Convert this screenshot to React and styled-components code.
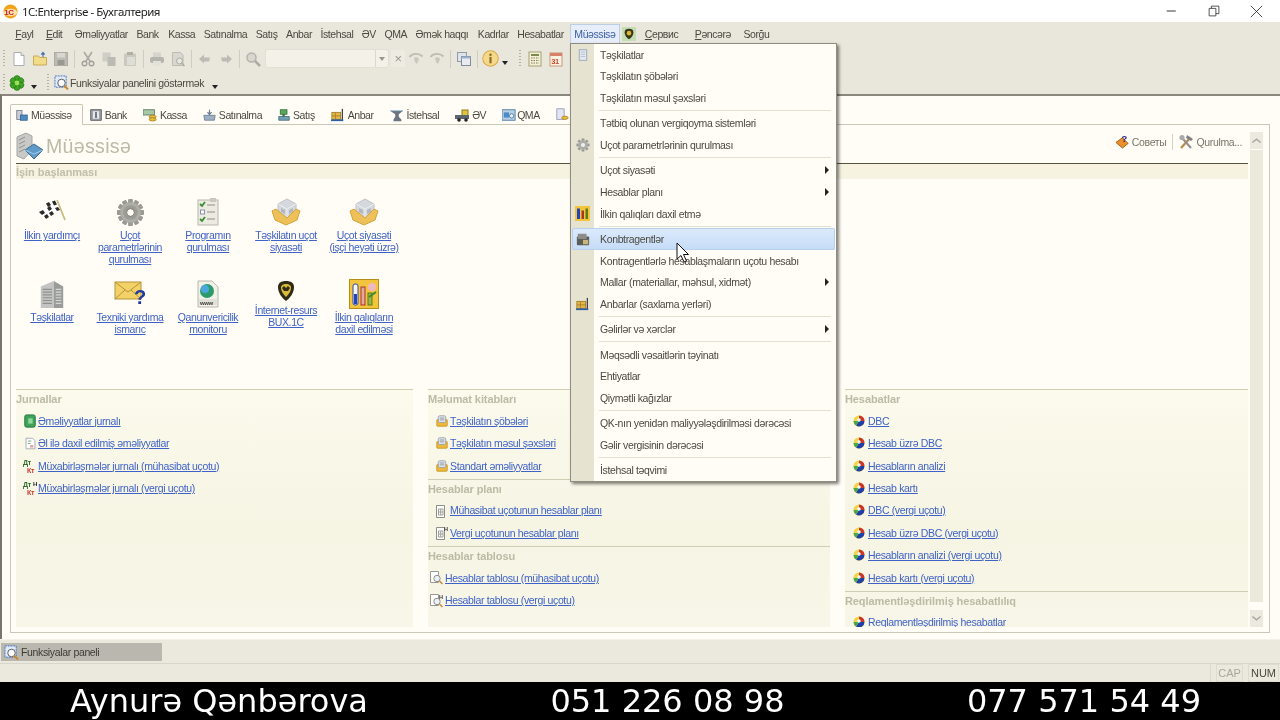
import React from 'react';
import styled, { createGlobalStyle } from 'styled-components';

const Global = createGlobalStyle`
  html, body { margin: 0; padding: 0; background: #000; }
  body { font-family: "Liberation Sans", Arial, sans-serif; }
  * { box-sizing: border-box; }
`;

const Window = styled.div`
  position: relative; width: 1280px; height: 720px; overflow: hidden;
  display: flex; flex-direction: column; background: #e9e6db;
  font: 10.5px/12px "Liberation Sans", Arial, sans-serif; letter-spacing: -.35px; color: #4a4940;
  filter: blur(0.3px);
`;
const TitleBar = styled.div`
  height: 22px; flex: none; background: #fff; display: flex; align-items: center;
  padding-left: 3px; font: 11.5px "Noto Sans", sans-serif; letter-spacing: -.5px; color: #222;
`;
const TitleText = styled.span` margin-left: 4px; `;
const WinControls = styled.div` margin-left: auto; display: flex; padding-right: 2px; `;
const WinButton = styled.div` width: 42.5px; height: 22px; display: flex; align-items: center; justify-content: center; `;

const MenuBar = styled.div`
  height: 24px; flex: none; display: flex; align-items: center; padding-left: 11px;
`;
const Grip = styled.i`
  flex: none; width: 2px; height: 17px; margin: ${p => p.$m || '0 3px 0 3px'};
  background: repeating-linear-gradient(#b5b2a6 0 1px, transparent 1px 3px);
`;
const MenuEntry = styled.div`
  padding: 0 3.25px; height: 20px; display: flex; align-items: center; white-space: nowrap; letter-spacing: -.42px;
  border: 1px solid ${p => p.$on ? '#bccde6' : 'transparent'};
  background: ${p => p.$on ? '#e7eefa' : 'transparent'};
  color: ${p => p.$on ? '#3a5ea6' : '#4a4940'};
  margin-left: ${p => p.$ml || 0}px;
`;
const ToolBar = styled.div`
  height: ${p => p.$h}px; flex: none; display: flex; align-items: center;
`;
const ToolSlot = styled.div`
  width: ${p => p.$w || 21}px; height: 21px; flex: none; display: flex; align-items: center; justify-content: center;
`;
const ToolSep = styled.i`
  flex: none; width: 1px; height: 18px; margin: 0 2.5px; background: #cfccc0;
`;
const Combo = styled.div`
  flex: none; width: 124px; height: 19px; margin-left: 2px; display: flex; border-radius: 3px;
  background: #f3f1e8; border: 1px solid #e2dfd4;
`;
const ComboDrop = styled.div`
  margin-left: auto; width: 13px; border-left: 1px solid #dbd8cd; display: flex; align-items: center; justify-content: center;
`;
const DownTri = styled.i`
  width: 0; height: 0; flex: none; border: 3px solid transparent; border-top: 4px solid ${p => p.$c || '#222'}; border-bottom: 0;
  margin-top: ${p => p.$mt || 0}px; margin-left: ${p => p.$ml || 0}px;
`;
const ClearBtn = styled.div`
  flex: none; width: 14px; height: 17px; margin-left: 2px; background: #eeebe2; color: #9a978c; font-size: 13px; display: flex; align-items: center; justify-content: center;
`;
const QuickBtn = styled.div`
  display: flex; align-items: center; gap: 1px; white-space: nowrap; margin-left: 1px;
`;
const Workspace = styled.div`
  flex: none; height: 545px; border-top: 2px solid #8a887e; border-left: 2px solid #77756c;
  background: #fffdf5; padding: 8px 10px 6px 8px; display: flex; flex-direction: column;
`;
const TabRow = styled.div` display: flex; height: 21px; flex: none; position: relative; z-index: 1; letter-spacing: -.45px; `;
const Tab = styled.div`
  display: flex; align-items: center; gap: ${p => p.$gap ?? 3}px; white-space: nowrap; height: 21px; padding: 0 8px;
  ${p => p.$on && `padding: 0 10px 0 5px; margin-right: -1px; background: #fffdf5; border: 1px solid #c9c7b6; border-bottom: 0; border-radius: 2px 2px 0 0;`}
`;
const DocBody = styled.div`
  flex: 1; min-height: 0; margin-top: -1px; border: 1px solid #c9c7b6; padding: 7px 7px 5px 5px; display: flex;
`;
const Scroller = styled.div`
  width: 1232px; flex: none; height: 100%; overflow: hidden; display: flex; flex-direction: column;
`;
const DocHead = styled.div`
  height: 32px; flex: none; border-bottom: 1px solid #55533f; display: flex; align-items: flex-start;
`;
const DocTitle = styled.div`
  margin-left: 2px; margin-top: 1px; font: 19.5px/26px "Liberation Sans", sans-serif; letter-spacing: .35px; color: #bcbaa6;
`;
const HeadTools = styled.div`
  margin-left: auto; margin-right: 6px; height: 19px; display: flex; align-items: center; gap: 2px; color: #77766a;
`;
const HeadSep = styled.i` width: 1px; height: 16px; background: #d5d3c4; margin: 0 3px 0 4px; `;
const Band = styled.div`
  height: 15px; flex: none; background: #f6f4e0; font-weight: bold; font-size: 11px; line-height: 16px; letter-spacing: -.05px; color: #c0beaa;
`;
const IconGrid = styled.div`
  display: grid; grid-template-columns: repeat(5, 72px); column-gap: 6px; grid-auto-rows: 82px; padding-top: 16px; height: 210px; flex: none;
`;
const GridCell = styled.div`
  display: flex; flex-direction: column; align-items: center; text-align: center; color: #3f62c8; letter-spacing: -.4px;
`;
const GridIcon = styled.div`
  height: ${p => p.$h || 34}px; flex: none; display: flex; align-items: center; justify-content: center;
`;
const GridLabel = styled.a` text-decoration: underline; line-height: 12px; white-space: nowrap; `;
const Columns = styled.div`
  display: grid; grid-template-columns: 397px 402px 403px; column-gap: 15px; height: 238px; flex: none; overflow: hidden;
`;
const Col = styled.div`
  background: linear-gradient(#fbfaec, #f6f4e3 60%, #f8f6e8); min-height: 0; overflow: hidden;
`;
const Section = styled.div` border-top: 1px solid #cfcdb2; padding-bottom: 1.9px; `;
const SecHead = styled.div`
  height: 19.6px; padding-top: 2px; font-weight: bold; font-size: 11px; line-height: 14px; letter-spacing: -.1px; color: #bcbaa5; white-space: nowrap;
`;
const LinkRow = styled.div`
  height: 22.4px; display: flex; align-items: center; gap: ${p => p.$gap}px; padding-left: ${p => p.$ind}px; color: #3f62c8; white-space: nowrap;
`;
const LinkText = styled.a` text-decoration: underline; `;
const ScrollBar = styled.div`
  width: 13px; flex: none; margin-left: 2px; display: flex; flex-direction: column; height: 100%;
`;
const ScrollBtn = styled.div`
  height: 17px; flex: none; background: #eceadf; display: flex; align-items: center; justify-content: center;
`;
const ScrollTrack = styled.div` height: 452px; margin-top: 1px; background: #ebe9dc; flex: none; `;
const Gap = styled.div` flex: 1; `;

const TaskBar = styled.div`
  height: 24px; flex: none; padding: 3px 0 3px 1px; background: #ebe8de; border-top: 1px solid #f4f2ea;
`;
const TaskBtn = styled.div`
  width: 161px; height: 18px; background: #bab7af; display: flex; align-items: center; gap: 2px; padding-left: 3px; color: #3c3b35;
`;
const StatusBar = styled.div`
  height: 19px; flex: none; display: flex; background: #ebe8de; border-top: 1px solid #d8d5ca; gap: 5px;
`;
const StatusMain = styled.div` width: 1211px; border-right: 1px solid #dcd9ce; `;
const StatusCell = styled.div`
  width: ${p => p.$w}px; display: flex; align-items: center; justify-content: center; border: 1px solid #dedbd0; color: ${p => p.$dim ? '#a9a79c' : '#4a4940'}; font-size: 11px; letter-spacing: 0;
`;
const Caption = styled.div`
  flex: 1; background: #000; color: #fff; display: flex; justify-content: space-between; align-items: center;
  padding: 0 79px 0 70px; font: 32px/38px "DejaVu Sans", sans-serif; letter-spacing: 0;
`;

const DropMenu = styled.div`
  position: absolute; left: 570px; top: 43px; width: 267px; height: 439px; z-index: 5; padding: 0 1px;
  border: 1px solid #8f8d80; box-shadow: 2px 2px 3px rgba(0,0,0,.5);
  background: linear-gradient(90deg, #e6e3d0 23px, #fffdf5 23px);
`;
const MItem = styled.div`
  height: 21.6px; display: flex; align-items: center; padding-right: 6px; white-space: nowrap; border-radius: 2px;
  ${p => p.$hl && `background: linear-gradient(#dcebfd, #c5dbf7); outline: 1px solid #b9d0ec; outline-offset: -1px;`}
`;
const MIcon = styled.div` width: 28px; flex: none; display: flex; justify-content: center; padding-right: 7px; `;
const MSep = styled.div`
  height: 3.8px; display: flex; align-items: center; margin-left: 27px; margin-right: 4px;
  &::before { content: ''; flex: 1; height: 1px; background: #e3e0d2; }
`;
const MArrow = styled.i`
  margin-left: auto; width: 0; height: 0; border: 4px solid transparent; border-left: 4px solid #222; border-right: 0;
`;
const CursorBox = styled.div` position: absolute; left: 676px; top: 242px; z-index: 6; line-height: 0; `;

/* ---------- drawn icons ---------- */
const S = ({ s = 16, children }) => (
  <svg width={s} height={s} viewBox="0 0 16 16">{children}</svg>
);
const I = {
  logo: () => <S s={15}><circle cx="8" cy="8" r="7.5" fill="#f2a31c" /><ellipse cx="8" cy="9" rx="7" ry="4" fill="#fbe3b0" /><text x="1.4" y="11.5" fontSize="8.5" fontWeight="bold" fontFamily="Liberation Sans" fill="#c8201a">1C</text></S>,
  min: () => <S s={12}><path d="M1 8h12" stroke="#222" strokeWidth="1.2" /></S>,
  max: () => <S s={12}><path d="M1.5 4.5h9v10h-9zM4.5 4.5v-3h10v10h-4" fill="none" stroke="#222" /></S>,
  close: () => <S s={13}><path d="M1 1l14 14M15 1L1 15" stroke="#222" strokeWidth="1" /></S>,
  shield: () => <S s={14}><rect width="16" height="16" fill="#c4deb4" /><path d="M8 2c3 0 5 1 5 4 0 4-3 7-5 8-2-1-5-4-5-8 0-3 2-4 5-4z" fill="#3a3418" /><circle cx="8" cy="7" r="2.6" fill="#d8b63a" /></S>,
  page: () => <S><path d="M3 1.5h7l3 3v10H3z" fill="#fff" stroke="#a9adb3" /><path d="M10 1.5v3h3" fill="#e4e6ea" stroke="#a9adb3" /></S>,
  open: () => <S><path d="M1.5 5h5l1 1.5h7v7.5h-13z" fill="#f2dc8a" stroke="#c9ac58" /><path d="M11 6V2M9.3 3.5L11 1.5l1.7 2" fill="none" stroke="#4a78b8" strokeWidth="1.2" /></S>,
  save: () => <S><rect x="1.5" y="1.5" width="13" height="13" fill="#bdbcb4" stroke="#adaca4" /><rect x="4" y="2" width="8" height="4.5" fill="#d8d7cf" /><rect x="4.5" y="9" width="7" height="5" fill="#9a9991" /></S>,
  cut: () => <S><path d="M4 1l6 9M12 1L6 10" stroke="#a9a8a1" strokeWidth="1.6" /><circle cx="4.500" cy="12.500" r="2.300" fill="none" stroke="#a2a19a" strokeWidth="1.400" /><circle cx="11.500" cy="12.500" r="2.300" fill="none" stroke="#a2a19a" strokeWidth="1.400" /></S>,
  copy: () => <S><rect x="1.500" y="1.500" width="8" height="9" fill="#cfcec6" /><rect x="6.500" y="6" width="8" height="9" fill="#bcbbb3" /></S>,
  paste: () => <S><rect x="2" y="2.500" width="12" height="12.500" rx="1" fill="#cac9c0" /><rect x="5" y="1" width="6" height="3" fill="#b1b0a8" /><rect x="5" y="6" width="8" height="8" fill="#dfded6" /></S>,
  print: () => <S><rect x="4" y="1.500" width="8" height="5" fill="#d6d5cd" /><rect x="1" y="6" width="14" height="6" rx="2" fill="#b6b5ad" /><rect x="4" y="10" width="8" height="4.500" fill="#e2e1d9" /></S>,
  preview: () => <S><path d="M2.500 1.500h8l2.500 2.500v10.500h-10.500z" fill="#d9d8d0" stroke="#bdbcb4" /><circle cx="9.500" cy="10" r="3" fill="#e9e8e0" stroke="#acaba3" /><path d="M11.500 12l3 3" stroke="#acaba3" strokeWidth="1.500" /></S>,
  back: () => <S><path d="M2 8l5-4.500v3h6l-1 4h-5v2z" fill="#bdbcb4" /></S>,
  fwd: () => <S><path d="M14 8l-5-4.500v3H3l1 4h5v2z" fill="#bdbcb4" /></S>,
  search: () => <S><circle cx="6.500" cy="6.500" r="4.500" fill="#d8d7cf" stroke="#b5b4ac" strokeWidth="1.500" /><path d="M10 10l5 5" stroke="#aeada5" strokeWidth="2.500" /></S>,
  ear: () => <S><path d="M1.500 6C4 2 11 2 14.500 5.500" fill="none" stroke="#bdbcb4" strokeWidth="1.800" /><path d="M6 7c2-1.500 4-1 5 1l-2 5-2-2" fill="#c8c7bf" /></S>,
  winCopy: () => <S><rect x="1.500" y="1.500" width="9" height="9" fill="#dfe4ea" stroke="#8f9bab" /><rect x="5.500" y="5.500" width="9" height="9" fill="#e8ecf0" stroke="#7f8c9c" /><rect x="5.500" y="5.500" width="9" height="2" fill="#9bb2ce" /></S>,
  info: () => <S s={17}><circle cx="8" cy="8" r="7.300" fill="#f5d98a" stroke="#d8ab4c" /><circle cx="8" cy="4.500" r="1.200" fill="#8a6a2a" /><rect x="7" y="6.500" width="2" height="6" fill="#8a6a2a" /></S>,
  calc: () => <S><rect x="2" y="1" width="12" height="14" fill="#f4f1d8" stroke="#a39f72" /><rect x="4" y="3" width="8" height="2" fill="#7c8a50" /><path d="M4 7h8M4 9.500h8M4 12h8" stroke="#7f7b50" strokeDasharray="1.500 1" /></S>,
  cal: () => <S><rect x="2" y="2" width="12" height="13" fill="#faf2e2" stroke="#c99a7a" /><rect x="2" y="2" width="12" height="3" fill="#d9826a" /><text x="3.200" y="13" fontSize="7.500" fontWeight="bold" fontFamily="Liberation Sans" fill="#c04a30">31</text></S>,
  flower: () => <S s={16}>{[0,60,120,180,240,300].map(a => <circle key={a} cx="8" cy="3.600" r="3" fill="#3fa324" stroke="#1f6f12" strokeWidth=".6" transform={`rotate(${a} 8 8)`} />)}<circle cx="8" cy="8" r="2.400" fill="#9be05a" /></S>,
  panel: () => <S s={15}><rect x="1" y="1" width="12" height="12" fill="#dfe9f7" stroke="#3f6fc0" strokeDasharray="2 1" /><circle cx="8" cy="8.500" r="4" fill="#fff" stroke="#555" /><path d="M11 11.500l4 4" stroke="#c98a2c" strokeWidth="2" /></S>,
  tabOrg: () => <S s={12}><rect x="1" y="2" width="7" height="12" fill="#c9ced6" stroke="#6a7280" /><rect x="6" y="8" width="9" height="7" fill="#4d8cc4" stroke="#2d5c88" /></S>,
  tabBank: () => <S s={12}><rect x="1" y="1" width="14" height="14" fill="#9ea3aa" stroke="#3c4046" /><rect x="4" y="3" width="8" height="10" fill="#e5e7ea" /><path d="M8 4v8" stroke="#222" strokeWidth="1.500" /></S>,
  tabCash: () => <S s={14}><rect x="0" y="2" width="13" height="6" fill="#a9c9a4" stroke="#5a7a66" /><ellipse cx="11" cy="10" rx="4" ry="1.800" fill="#e8be3c" stroke="#a8821c" /><ellipse cx="11" cy="13" rx="4" ry="1.800" fill="#e8be3c" stroke="#a8821c" /></S>,
  tabBuy: () => <S s={13}><path d="M1 9h14l-1 6H2z" fill="#9fb0c4" stroke="#6a7a90" /><path d="M8 2v6M5.500 5L8 8l2.500-3" fill="none" stroke="#6a7a90" strokeWidth="1.400" /></S>,
  tabSale: () => <S s={12}><rect x="3" y="1" width="9" height="6" fill="#5aa65c" stroke="#2e6a30" /><path d="M1 10h14v5H1z" fill="#6fa0b4" stroke="#3a6476" /><rect x="6" y="7" width="3" height="3" fill="#3a6a3c" /></S>,
  tabStore: () => <S s={14}><rect x="1" y="5" width="10" height="8" fill="#e2b64c" stroke="#a57f22" /><path d="M1 9h10M5 5v8" stroke="#a57f22" /><path d="M13 1v13" stroke="#444" strokeWidth="1.500" /><path d="M0 14h14" stroke="#2d5ea8" strokeWidth="2" /></S>,
  tabProd: () => <S s={14}><path d="M0 3h15l-5 4v3l3 3v2H4v-2l2-3V7z" fill="#6b7480" /><path d="M0 3h15" stroke="#9fc0da" /></S>,
  tabTruck: () => <S s={16}><rect x="7" y="3" width="6" height="6" fill="#e2c23c" stroke="#8f7a1c" /><rect x="0" y="8" width="14" height="4" fill="#5c6470" /><circle cx="4" cy="13" r="1.800" fill="#222" /><circle cx="11" cy="13" r="1.800" fill="#222" /></S>,
  tabQma: () => <S s={14}><rect x="0" y="2" width="15" height="12" fill="#b8d0e4" stroke="#4a7aa4" /><rect x="2" y="5" width="6" height="6" fill="#4d8cc4" /><circle cx="11" cy="9" r="2.500" fill="#e9f0f6" stroke="#4a7aa4" /></S>,
  tabLast: () => <S s={13}><rect x="1" y="1" width="9" height="13" fill="#e3e6f2" stroke="#8d93b8" /><ellipse cx="11" cy="12" rx="4" ry="2" fill="#e8be3c" stroke="#a8821c" /></S>,
  tips: () => <S s={15}><path d="M1 9l7-5 6 6-6 5z" fill="#e8912c" stroke="#a85c14" /><text x="7" y="8" fontSize="10" fontWeight="bold" fontFamily="Liberation Sans" fill="#25258c">?</text></S>,
  tools: () => <S s={16}><path d="M3 14L12 4" stroke="#b98a4a" strokeWidth="2.200" /><path d="M13 14L5 5" stroke="#8f8f8f" strokeWidth="2" /><path d="M9 1l6 4-2 2-5-3z" fill="#7f7f7f" /><circle cx="4" cy="3.500" r="2.600" fill="#aaa" /></S>,
  chevUp: () => <S s={11}><path d="M2 11l6-5 6 5" fill="none" stroke="#a9a79b" strokeWidth="2" /></S>,
  chevDown: () => <S s={11}><path d="M2 5l6 5 6-5" fill="none" stroke="#a9a79b" strokeWidth="2" /></S>,

  jGreen: () => <S s={14}><rect x="2" y="1" width="12" height="14" rx="2" fill="#3fa35a" stroke="#1f6f3a" /><rect x="6" y="5" width="5" height="6" fill="#8ed8a0" /></S>,
  jDoc: () => <S s={13}><path d="M2.500 1.500h8l3 3v10h-11z" fill="#fff" stroke="#9aa0a8" /><path d="M5 5h4M5 8h3" stroke="#5a9a6a" /><path d="M7.500 10h4v3h-4z" fill="#e6a0a0" /></S>,
  dtkt: ({ h }) => <svg width="15" height="16" viewBox="0 0 15 16"><text x="0" y="7" fontSize="7" fontWeight="bold" fontFamily="Liberation Sans" fill="#2f6a2c">Дт</text><text x="4" y="15" fontSize="7" fontWeight="bold" fontFamily="Liberation Sans" fill="#c7362a">Кт</text>{h && <text x="10" y="6" fontSize="6" fontWeight="bold" fontFamily="Liberation Sans" fill="#222">Н</text>}</svg>,
  ref: () => <S s={12}><rect x="1" y="6" width="14" height="9" rx="1" fill="#eeb83c" stroke="#c48f1c" /><rect x="3" y="1" width="10" height="9" rx="2" fill="#dfe3ea" stroke="#8d95a4" /><path d="M5 4h6M5 6.500h6" stroke="#7f8796" /></S>,
  chart: ({ h }) => <svg width="12" height="15" viewBox="0 0 12 15"><path d="M.5 2.500h8v12h-8z" fill="#fff" stroke="#8f8f8a" /><path d="M2.500 6h4.500v6H2.500zM4.700 6v6M2.500 9h4.500" fill="none" stroke="#a0a09a" />{h && <text x="8" y="6" fontSize="5.500" fontWeight="bold" fontFamily="Liberation Sans" fill="#333">Н</text>}</svg>,
  rep: ({ h }) => <svg width="14" height="15" viewBox="0 0 14 15"><path d="M.5 1.500h8v11h-8z" fill="#fff" stroke="#9a9a94" /><circle cx="7" cy="8.500" r="3.200" fill="#eef2f6" stroke="#8f8f8a" /><path d="M9.500 11l3 3" stroke="#c98a3c" strokeWidth="1.500" />{h && <text x="9" y="5.500" fontSize="5.500" fontWeight="bold" fontFamily="Liberation Sans" fill="#333">Н</text>}</svg>,
  pie: () => <svg width="12" height="12" viewBox="0 0 12 12"><circle cx="6" cy="6" r="5.500" fill="#f0d44a" /><path d="M6 6V.5A5.500 5.500 0 0 1 11.500 6z" fill="#c8352c" /><path d="M6 6h5.500A5.500 5.500 0 0 1 3 10.600z" fill="#1f3ea8" /><path d="M6 6L3 10.600A5.500 5.500 0 0 1 .5 6z" fill="#4aa84a" /><circle cx="6" cy="5" r="1.700" fill="#fff" /></svg>,

  bOrg: () => <svg width="28" height="28" viewBox="0 0 28 28"><path d="M1 5l9-4 6 3v14l-8 9-7-3z" fill="#c9cac8" stroke="#a5a6a4" /><path d="M3 8l6-3M3 12l6-3M3 16l6-3M3 20l6-3" stroke="#8f918f" /><path d="M9 18l9-6 9 6-9 9z" fill="#5f9ac8" stroke="#3a6c94" /><path d="M9 18l9 4 9-4" fill="none" stroke="#a5cbe8" /></svg>,
  bFlag: () => <svg width="28" height="26" viewBox="0 0 28 26"><path d="M19 1l8 20" stroke="#c8bc82" strokeWidth="1.800" /><path d="M1 13l5-3 4-6 5-2 3-1 4 11-5 1-4 3-5 4z" fill="#fff" /><path d="M1 13l4-2 2 3-3 2zM9 9l3-2 2 3-3 2zM8 4.500l3-1.500 2 3-3 2zM14 2.500l3-1 2 4-3 1zM11 14l3-2 2 3-3 2zM17 9l3-1 2 3-3 1zM6 17l3-2 2 3-3 2z" fill="#2a2a28" /></svg>,
  bGear: () => <svg width="29" height="29" viewBox="0 0 30 30">{[0,30,60,90,120,150].map(a => <rect key={a} x="12.500" y="1" width="5" height="28" rx="1" fill="#9a9a94" transform={`rotate(${a} 15 15)`} />)}<circle cx="15" cy="15" r="10.500" fill="#aeaea8" /><circle cx="15" cy="15" r="7.500" fill="#9c9c96" /><circle cx="15" cy="15" r="4" fill="#fffdf5" stroke="#77776f" /></svg>,
  bCheck: () => <svg width="22" height="28" viewBox="0 0 22 28"><rect x="1" y="2" width="20" height="25" fill="#ecebe2" stroke="#b8b7ac" /><rect x="13" y="0" width="6" height="4" fill="#c9c8be" /><path d="M3 6l2 2 3-4M3 21l2 2 3-4" fill="none" stroke="#3a8a2c" strokeWidth="1.800" /><rect x="3.500" y="12" width="4" height="4" fill="#fff" stroke="#8f8fb0" /><path d="M10 7h8M10 14h8M10 21h8" stroke="#b0aea4" strokeWidth="1.400" /></svg>,
  bTray: () => <svg width="30" height="28" viewBox="0 0 30 28"><path d="M7 6l9-5 9 5v9l-9 6-9-6z" fill="#d5d8dc" stroke="#c0c3c8" /><path d="M7 6l9 5 9-5M16 11v10" fill="none" stroke="#eceef0" /><path d="M10 10l4 2v4l-4-2zM18 12l4-2v4l-4 2z" fill="#b3b8be" /><path d="M1 13l4-2 11 9 9-9 4 2-3 9-11 5-11-5z" fill="#eec05a" stroke="#d3a43a" /></svg>,
  bBuilding: () => <svg width="26" height="28" viewBox="0 0 26 30"><path d="M1 7l14-6v29H1z" fill="#c3c4c2" /><path d="M15 1l10 6v23H15z" fill="#9a9c9a" /><path d="M3 10h10M3 13h10M3 16h10M3 19h10M3 22h10M3 25h10" stroke="#8f918f" strokeWidth="1.200" /><path d="M17 10h6M17 13h6M17 16h6M17 19h6M17 22h6M17 25h6" stroke="#d4d5d3" strokeWidth="1.200" /></svg>,
  bMail: () => <svg width="32" height="28" viewBox="0 0 32 28"><rect x="1" y="2" width="26" height="17" fill="#f2d167" stroke="#b6933a" /><path d="M1 2l13 10L27 2M1 19l10-9M27 19l-10-9" fill="none" stroke="#b6933a" /><text x="20" y="24" fontSize="20" fontWeight="bold" fontFamily="Liberation Sans" fill="#1f3a9c">?</text></svg>,
  bWww: () => <svg width="22" height="28" viewBox="0 0 22 28"><path d="M1 1h14l6 6v20H1z" fill="#f2f1e8" stroke="#b8b7ac" /><circle cx="10" cy="11" r="7" fill="#2c9a6a" /><circle cx="8" cy="9" r="4" fill="#4aa8de" /><rect x="2" y="19" width="18" height="6" fill="#e2e1d8" /><text x="3" y="24.500" fontSize="6" fontWeight="bold" fontFamily="Liberation Sans" fill="#444">www</text></svg>,
  bShield: () => <svg width="18" height="20" viewBox="0 0 18 20"><path d="M9 0c5 0 8 2 8 6 0 6-4 11-8 14-4-3-8-8-8-14 0-4 3-6 8-6z" fill="#2f2a14" /><path d="M9 3c3 0 5 1 5 4 0 3-2 6-5 9-3-3-5-6-5-9 0-3 2-4 5-4z" fill="#d9b93a" /><path d="M5 7l2-2 2 2 2-2 2 2-2 3H7z" fill="#2f2a14" /></svg>,
  bBars: () => <svg width="30" height="30" viewBox="0 0 30 30"><rect x=".5" y=".5" width="29" height="29" fill="#f2c53c" stroke="#b68d18" /><rect x="4" y="5" width="5" height="21" rx="2" fill="#f7f5ef" stroke="#2b4aa8" /><rect x="5" y="15" width="3" height="10" fill="#2244c0" /><rect x="12" y="8" width="4" height="18" fill="#e8a8a0" stroke="#a8342c" /><rect x="19" y="14" width="4" height="12" fill="#9ab84a" stroke="#5a7a1c" /><circle cx="23" cy="8" r="4" fill="#f0b8c0" /><path d="M20 18l7-5" stroke="#3f8a2c" strokeWidth="2" /></svg>,
  cursor: () => <svg width="13" height="21" viewBox="0 0 13 21"><path d="M1 1v16l4-3.500 3 6.500 2.500-1-3-6.500h5z" fill="#fff" stroke="#111" strokeWidth="1" /></svg>,
};

const Tool = ({ n, w }) => { const C = I[n]; return <ToolSlot $w={w}><C /></ToolSlot>; };

const menuBar = [
  [<><u>F</u>ayl</>], [<><u>E</u>dit</>, 4], ['Əməliyyatlar', 4], ['Bank'], ['Kassa', 1], ['Satınalma'], ['Satış'], ['Anbar'], ['İstehsal'], ['ƏV'], ['QMA'], ['Əmək haqqı'], ['Kadrlar', 1], ['Hesabatlar'],
];
const tabs = [
  ['tabBank', 'Bank'], ['tabCash', 'Kassa'], ['tabBuy', 'Satınalma'], ['tabSale', 'Satış'], ['tabStore', 'Anbar'], ['tabProd', 'İstehsal'], ['tabTruck', 'ƏV', 1], ['tabQma', 'QMA', 1],
];
const gridItems = [
  ['bFlag', ['İlkin yardımçı']], ['bGear', ['Uçot', 'parametrlərinin', 'qurulması']], ['bCheck', ['Programın', 'qurulması']], ['bTray', ['Təşkilatın uçot', 'siyasəti']], ['bTray', ['Uçot siyasəti', '(işçi heyəti üzrə)']],
  ['bBuilding', ['Təşkilatlar']], ['bMail', ['Texniki yardıma', 'ismarıc']], ['bWww', ['Qanunvericilik', 'monitoru']], ['bShield', ['İnternet-resurs', 'BUX.1C'], 27], ['bBars', ['İlkin qalıqların', 'daxil edilməsi']],
];
const L = (icon, text, ind, gap, h) => ({ icon, text, ind, gap, h });
const col1 = [{ head: 'Jurnallar', links: [
  L('jGreen', 'Əməliyyatlar jurnalı', 7, 1), L('jDoc', 'Əl ilə daxil edilmiş əməliyyatlar', 8, 1),
  L('dtkt', 'Müxabirləşmələr jurnalı (mühasibat uçotu)', 7, 0), L('dtkt', 'Müxabirləşmələr jurnalı (vergi uçotu)', 7, 0, true),
] }];
const col2 = [
  { head: 'Məlumat kitabları', links: ['Təşkilatın şöbələri', 'Təşkilatın məsul şəxsləri', 'Standart əməliyyatlar'].map(t => L('ref', t, 8, 2)) },
  { head: 'Hesablar planı', links: [L('chart', 'Mühasibat uçotunun hesablar planı', 8, 2), L('chart', 'Vergi uçotunun hesablar planı', 8, 2, true)] },
  { head: 'Hesablar tablosu', links: [L('rep', 'Hesablar tablosu (mühasibat uçotu)', 2, 1), L('rep', 'Hesablar tablosu (vergi uçotu)', 2, 1, true)] },
];
const col3 = [
  { head: 'Hesabatlar', links: ['DBC', 'Hesab üzrə DBC', 'Hesabların analizi', 'Hesab kartı', 'DBC (vergi uçotu)', 'Hesab üzrə DBC (vergi uçotu)', 'Hesabların analizi (vergi uçotu)', 'Hesab kartı (vergi uçotu)'].map(t => L('pie', t, 8, 3)) },
  { head: 'Reqlamentləşdirilmiş hesabatlılıq', links: [L('pie', 'Reqlamentləşdirilmiş hesabatlar', 8, 3)] },
];
const menu = [
  { i: 'org', t: 'Təşkilatlar' }, { t: 'Təşkilatın şöbələri' }, { t: 'Təşkilatın məsul şəxsləri' }, 0,
  { t: 'Tətbiq olunan vergiqoyma sistemləri' }, { i: 'gear', t: 'Uçot parametrlərinin qurulması' }, 0,
  { t: 'Uçot siyasəti', a: 1 }, { t: 'Hesablar planı', a: 1 }, { i: 'bars', t: 'İlkin qalıqları daxil etmə' }, 0,
  { i: 'bag', t: 'Konbtragentlər', hl: 1 }, { t: 'Kontragentlərlə hesablaşmaların uçotu hesabı' }, { t: 'Mallar (materiallar, məhsul, xidmət)', a: 1 }, { i: 'store', t: 'Anbarlar (saxlama yerləri)' }, 0,
  { t: 'Gəlirlər və xərclər', a: 1 }, 0,
  { t: 'Məqsədli vəsaitlərin təyinatı' }, { t: 'Ehtiyatlar' }, { t: 'Qiymətli kağızlar' }, 0,
  { t: 'QK-nın yenidən maliyyələşdirilməsi dərəcəsi' }, { t: 'Gəlir vergisinin dərəcəsi' }, 0,
  { t: 'İstehsal təqvimi' },
];
const menuIcons = {
  org: () => <S s={12}><rect x="3" y="1" width="10" height="14" fill="#e4eaf2" stroke="#8f9bb0" /><path d="M5 4h6M5 7h6M5 10h6" stroke="#aab4c4" /></S>,
  gear: () => <svg width="14" height="14" viewBox="0 0 30 30">{[0,45,90,135].map(a => <rect key={a} x="12" y="1" width="6" height="28" fill="#9a9a94" transform={`rotate(${a} 15 15)`} />)}<circle cx="15" cy="15" r="10" fill="#aeaea8" /><circle cx="15" cy="15" r="4.500" fill="#eee" /></svg>,
  bars: () => <svg width="15" height="15" viewBox="0 0 30 30"><rect width="30" height="30" fill="#f2c53c" /><rect x="4" y="5" width="6" height="21" fill="#2244c0" /><rect x="13" y="9" width="5" height="17" fill="#a8342c" /><rect x="21" y="5" width="5" height="21" fill="#5a7a1c" /></svg>,
  bag: () => <S s={14}><rect x="1" y="5" width="14" height="10" rx="1" fill="#5c5c58" /><rect x="2" y="2" width="10" height="6" fill="#8c8c86" /><rect x="8" y="9" width="6" height="5" fill="#c8b878" /></S>,
  store: () => <I.tabStore />,
};

const renderCol = sections => sections.map(s => (
  <Section key={s.head}>
    <SecHead>{s.head}</SecHead>
    {s.links.map(l => { const C = I[l.icon]; return (
      <LinkRow key={l.text} $ind={l.ind} $gap={l.gap}><C h={l.h} /><LinkText>{l.text}</LinkText></LinkRow>
    ); })}
  </Section>
));

export default function App() {
  return (
    <Window>
      <Global />
      <TitleBar>
        <I.logo />
        <TitleText>1C:Enterprise - Бухгалтерия</TitleText>
        <WinControls>
          <WinButton><I.min /></WinButton>
          <WinButton><I.max /></WinButton>
          <WinButton><I.close /></WinButton>
        </WinControls>
      </TitleBar>
      <MenuBar>
        {menuBar.map(([t, ml], i) => <MenuEntry key={i} $ml={ml}>{t}</MenuEntry>)}
        <MenuEntry $on $ml={2}>Müəssisə</MenuEntry>
        <ToolSlot $w={18}><I.shield /></ToolSlot>
        <MenuEntry $ml={3}><u>С</u>ервис</MenuEntry>
        <MenuEntry $ml={8}><u>P</u>əncərə</MenuEntry>
        <MenuEntry $ml={4}>Sorğu</MenuEntry>
      </MenuBar>
      <ToolBar $h={25}>
        <Grip />
        <Tool n="page" /><Tool n="open" /><Tool n="save" /><ToolSep />
        <Tool n="cut" /><Tool n="copy" /><Tool n="paste" /><ToolSep />
        <Tool n="print" /><Tool n="preview" /><ToolSep />
        <Tool n="back" /><Tool n="fwd" /><ToolSep />
        <Tool n="search" />
        <Combo><ComboDrop><DownTri $c="#9a978c" /></ComboDrop></Combo>
        <ClearBtn>×</ClearBtn>
        <Tool n="ear" /><Tool n="ear" /><ToolSep />
        <Tool n="winCopy" /><ToolSep />
        <Tool n="info" /><DownTri $mt={8} $ml={1} />
        <Grip $m="0 3px 0 11px" />
        <Tool n="calc" /><Tool n="cal" />
      </ToolBar>
      <ToolBar $h={23}>
        <Grip />
        <ToolSlot $w={18}><I.flower /></ToolSlot>
        <DownTri $mt={9} $ml={5} />
        <Grip $m="0 4px 0 10px" />
        <QuickBtn><I.panel />Funksiyalar panelini göstərmək</QuickBtn>
        <DownTri $mt={9} $ml={8} />
      </ToolBar>
      <Workspace>
        <TabRow>
          <Tab $on><I.tabOrg />Müəssisə</Tab>
          {tabs.map(([ic, t, g]) => { const C = I[ic]; return <Tab key={t} $gap={g}><C />{t}</Tab>; })}
          <Tab><I.tabLast /></Tab>
        </TabRow>
        <DocBody>
          <Scroller>
            <DocHead>
              <I.bOrg />
              <DocTitle>Müəssisə</DocTitle>
              <HeadTools>
                <I.tips />Советы<HeadSep /><I.tools />Qurulma...
              </HeadTools>
            </DocHead>
            <Band>İşin başlanması</Band>
            <IconGrid>
              {gridItems.map(([ic, lines, h], i) => { const C = I[ic]; return (
                <GridCell key={i}>
                  <GridIcon $h={h}><C /></GridIcon>
                  <GridLabel>{lines.map(x => <div key={x}>{x}</div>)}</GridLabel>
                </GridCell>
              ); })}
            </IconGrid>
            <Columns>
              <Col>{renderCol(col1)}</Col>
              <Col>{renderCol(col2)}</Col>
              <Col>{renderCol(col3)}</Col>
            </Columns>
          </Scroller>
          <ScrollBar>
            <ScrollBtn><I.chevUp /></ScrollBtn>
            <ScrollTrack />
            <Gap />
            <ScrollBtn><I.chevDown /></ScrollBtn>
          </ScrollBar>
        </DocBody>
      </Workspace>
      <TaskBar><TaskBtn><I.panel />Funksiyalar paneli</TaskBtn></TaskBar>
      <StatusBar>
        <StatusMain />
        <StatusCell $w={27} $dim>CAP</StatusCell>
        <StatusCell $w={31}>NUM</StatusCell>
      </StatusBar>
      <Caption><span>Aynurə Qənbərova</span><span>051 226 08 98</span><span>077 571 54 49</span></Caption>
      <DropMenu>
        {menu.map((m, i) => {
          if (!m) return <MSep key={i} />;
          const C = m.i && menuIcons[m.i];
          return (
            <MItem key={i} $hl={m.hl}>
              <MIcon>{C && <C />}</MIcon>
              {m.t}
              {m.a && <MArrow />}
            </MItem>
          );
        })}
      </DropMenu>
      <CursorBox><I.cursor /></CursorBox>
    </Window>
  );
}
